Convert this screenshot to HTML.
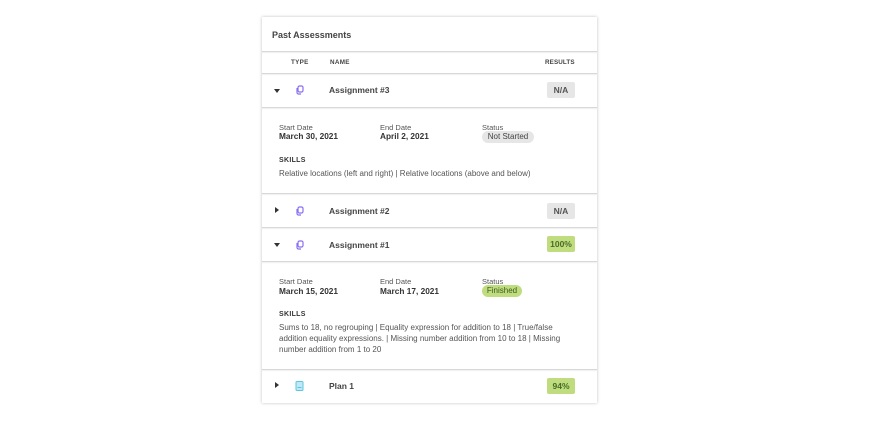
<!DOCTYPE html>
<html><head><style>
body{margin:0;width:890px;height:423px;background:#fff;font-family:"Liberation Sans",sans-serif;color:#333;position:relative;overflow:hidden}
.card{position:absolute;left:262px;top:17px;width:335px;height:386px;background:#fff;box-shadow:0 0 3px rgba(0,0,0,.25)}
.a{position:absolute;white-space:nowrap}
.hr{position:absolute;left:262px;width:335px;height:1px;background:#d8d8d8;box-shadow:0 1px 1px rgba(0,0,0,.08)}
.name{font-size:8.5px;font-weight:bold;color:#444;letter-spacing:0}
.badge{position:absolute;left:547px;width:28px;height:16px;border-radius:2px;font-size:8.5px;font-weight:bold;text-align:center;line-height:16px;color:#555}
.na{background:#e6e6e6}.gr{background:#bfdd7f;color:#4a6a26}
.lab{font-size:7.5px;color:#555}
.val{font-size:8.3px;font-weight:bold;color:#333;letter-spacing:0}
.sk{font-size:7px;font-weight:bold;letter-spacing:.3px;color:#333}
.txt{font-size:8px;color:#555;line-height:11px;letter-spacing:0}
.pill{position:absolute;height:12px;border-radius:6px;font-size:8px;line-height:12px;text-align:center}
.down{position:absolute;width:0;height:0;border-left:3.5px solid transparent;border-right:3.5px solid transparent;border-top:4px solid #333}
.right{position:absolute;width:0;height:0;border-top:3.5px solid transparent;border-bottom:3.5px solid transparent;border-left:4px solid #333}
</style></head><body>
<div class="card"></div>
<div class="a" style="left:272px;top:30px;font-size:9px;font-weight:bold;color:#444">Past Assessments</div>
<div class="hr" style="top:51px"></div>
<div class="a sk" style="left:291px;top:59px;font-size:6.3px;color:#444">TYPE</div>
<div class="a sk" style="left:330px;top:59px;font-size:6.3px;color:#444">NAME</div>
<div class="a sk" style="left:545px;top:59px;font-size:6.3px;color:#444;letter-spacing:.1px">RESULTS</div>
<div class="hr" style="top:73px"></div>

<!-- row 3 -->
<div class="down" style="left:274px;top:89px"></div>
<svg class="a" style="left:295px;top:85px" width="9" height="10" viewBox="0 0 9 10"><rect x="3" y="1" width="5" height="6" rx="1.5" fill="none" stroke="#8a6ff0" stroke-width="1.2"/><path d="M2 3v4.5a1.5 1.5 0 0 0 1.5 1.5H6" fill="none" stroke="#8a6ff0" stroke-width="1.2"/></svg>
<div class="a name" style="left:329px;top:85px">Assignment #3</div>
<div class="badge na" style="top:82px">N/A</div>
<div class="hr" style="top:107px"></div>
<div class="a lab" style="left:279px;top:123px">Start Date</div>
<div class="a val" style="left:279px;top:131px">March 30, 2021</div>
<div class="a lab" style="left:380px;top:123px">End Date</div>
<div class="a val" style="left:380px;top:131px">April 2, 2021</div>
<div class="a lab" style="left:482px;top:123px">Status</div>
<div class="pill" style="left:482px;top:131px;width:52px;background:#e6e6e6;color:#444">Not Started</div>
<div class="a sk" style="left:279px;top:157px">SKILLS</div>
<div class="a txt" style="left:279px;top:168px">Relative locations (left and right) | Relative locations (above and below)</div>
<div class="hr" style="top:193px"></div>

<!-- row 2 -->
<div class="right" style="left:275px;top:207px"></div>
<svg class="a" style="left:295px;top:206px" width="9" height="10" viewBox="0 0 9 10"><rect x="3" y="1" width="5" height="6" rx="1.5" fill="none" stroke="#8a6ff0" stroke-width="1.2"/><path d="M2 3v4.5a1.5 1.5 0 0 0 1.5 1.5H6" fill="none" stroke="#8a6ff0" stroke-width="1.2"/></svg>
<div class="a name" style="left:329px;top:206px">Assignment #2</div>
<div class="badge na" style="top:203px">N/A</div>
<div class="hr" style="top:227px"></div>

<!-- row 1 -->
<div class="down" style="left:274px;top:243px"></div>
<svg class="a" style="left:295px;top:240px" width="9" height="10" viewBox="0 0 9 10"><rect x="3" y="1" width="5" height="6" rx="1.5" fill="none" stroke="#8a6ff0" stroke-width="1.2"/><path d="M2 3v4.5a1.5 1.5 0 0 0 1.5 1.5H6" fill="none" stroke="#8a6ff0" stroke-width="1.2"/></svg>
<div class="a name" style="left:329px;top:240px">Assignment #1</div>
<div class="badge gr" style="top:236px">100%</div>
<div class="hr" style="top:261px"></div>
<div class="a lab" style="left:279px;top:277px">Start Date</div>
<div class="a val" style="left:279px;top:286px">March 15, 2021</div>
<div class="a lab" style="left:380px;top:277px">End Date</div>
<div class="a val" style="left:380px;top:286px">March 17, 2021</div>
<div class="a lab" style="left:482px;top:277px">Status</div>
<div class="pill" style="left:482px;top:285px;width:40px;background:#bfdd7f;color:#3d5a1c">Finished</div>
<div class="a sk" style="left:279px;top:311px">SKILLS</div>
<div class="a txt" style="left:279px;top:322px;white-space:normal;width:300px">Sums to 18, no regrouping | Equality expression for addition to 18 | True/false addition equality expressions. | Missing number addition from 10 to 18 | Missing number addition from 1 to 20</div>
<div class="hr" style="top:369px"></div>

<!-- plan -->
<div class="right" style="left:275px;top:382px"></div>
<svg class="a" style="left:295px;top:381px" width="9" height="10" viewBox="0 0 9 10"><rect x="1" y="0.5" width="7" height="9" rx="1" fill="#bfeaf5" stroke="#5cc6e0" stroke-width="1"/><path d="M2.5 6.5h4" stroke="#5cc6e0" stroke-width="1"/></svg>
<div class="a name" style="left:329px;top:381px">Plan 1</div>
<div class="badge gr" style="top:378px">94%</div>
</body></html>
